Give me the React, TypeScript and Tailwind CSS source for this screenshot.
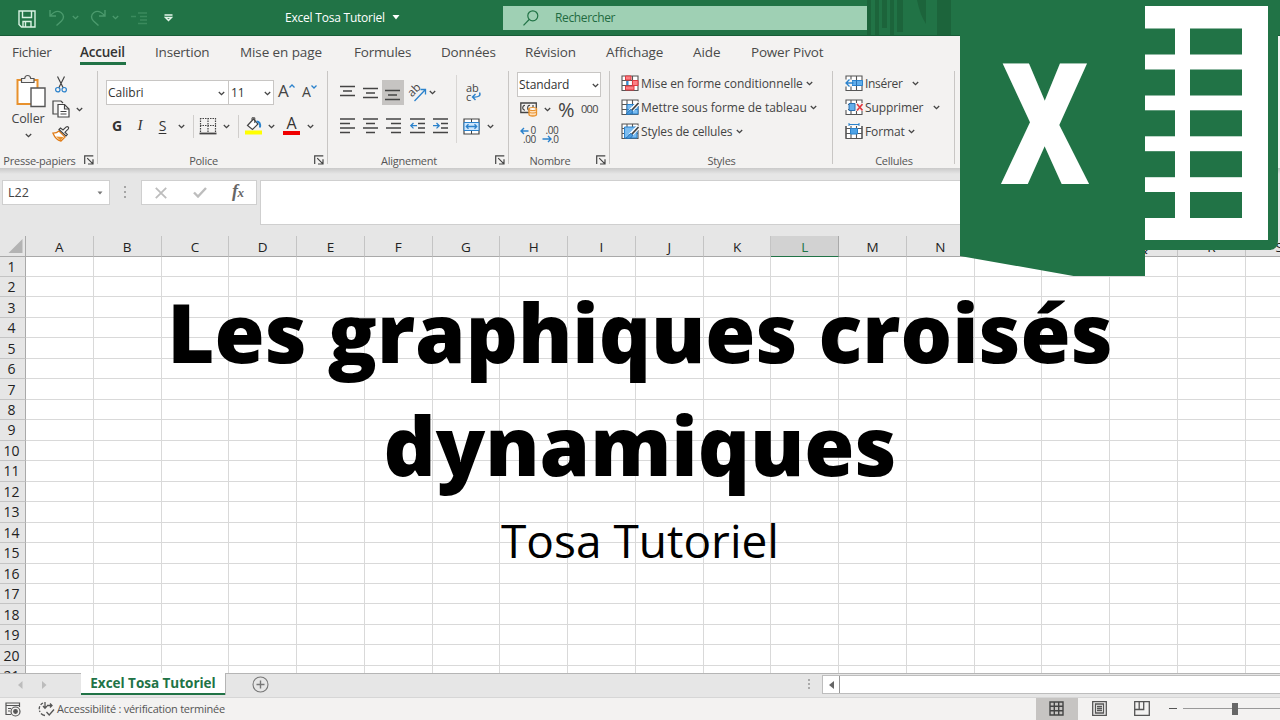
import React from "react";

const tabs = [
  { name: "Fichier", cell: "w-[80px] pl-[12px] tracking-[-0.3px]" },
  { name: "Accueil", cell: "w-[75px]" },
  { name: "Insertion", cell: "w-[85px] tracking-[-0.2px]" },
  { name: "Mise en page", cell: "w-[114px]" },
  { name: "Formules", cell: "w-[87px] tracking-[-0.2px]" },
  { name: "Données", cell: "w-[84px] tracking-[-0.2px]" },
  { name: "Révision", cell: "w-[81px] tracking-[-0.2px]" },
  { name: "Affichage", cell: "w-[87px]" },
  { name: "Aide", cell: "w-[58px]" },
  { name: "Power Pivot", cell: "w-[90px] tracking-[-0.2px]" },
];

const columns = "ABCDEFGHIJKLMNOPQRS".split("");
const rows = Array.from({ length: 21 }, (_, i) => i + 1);

function Chevron({ className = "" }: { className?: string }) {
  return (
    <svg viewBox="0 0 7 5" className={`h-[5px] w-[7px] shrink-0 ${className}`} fill="none" stroke="#444" strokeWidth="1.3">
      <path d="M.8 1l2.7 2.7L6.2 1" />
    </svg>
  );
}

function Launcher() {
  return (
    <svg viewBox="0 0 10 10" className="h-[10px] w-[10px]" fill="none" stroke="#444" strokeWidth="1.2">
      <path d="M.7 9V.8h8.6M3.2 3.2l5.5 5.5M9 4.2V9H4" />
    </svg>
  );
}

function Group({
  title,
  width,
  launcher = true,
  children,
}: {
  title: string;
  width: string;
  launcher?: boolean;
  children: React.ReactNode;
}) {
  return (
    <section className={`flex h-[102px] shrink-0 flex-col ${width}`}>
      <div className="mt-[5px] flex h-[93px] flex-col border-r border-[#c8c6c4]">
        <div className="h-[81px] shrink-0">{children}</div>
        <div className="flex h-[16px] shrink-0 items-center pr-[3px]">
          <span className={`flex-1 text-center text-[11px] leading-none tracking-[-0.25px] whitespace-nowrap text-[#555] ${launcher ? "mr-[5px]" : "-mr-[4px]"}`}>
            {title}
          </span>
          {launcher && <Launcher />}
        </div>
      </div>
    </section>
  );
}

// Four-line paragraph icon, the offsets give the alignment
function Lines({ d, className = "" }: { d: string; className?: string }) {
  return (
    <svg viewBox="0 0 16 16" className={`h-[16px] w-[16px] shrink-0 ${className}`} stroke="#444" strokeWidth="1.3" fill="none">
      <path d={d} />
    </svg>
  );
}

function TableIcon({ kind }: { kind: string }) {
  return (
    <svg viewBox="0 0 18 17" className="h-[17px] w-[18px] shrink-0" fill="none">
      <path d="M1 1h16v14.5H1zM6 1v14.5M11.5 1v14.5M1 5.500h16M1 10.500h16" fill="#fff" stroke="#555" strokeWidth="1.1" />
      {kind === "cond" && (
        <>
          <path d="M4.500 1h5.500v4H4.500zM4.500 11H13v4H4.500zM11.500 5.500H17v5h-5.500z" fill="#fb7f84" stroke="#e0393f" />
          <path d="M5.500 6h2v4h-2z" fill="#2f8fdb" />
        </>
      )}
      {(kind === "table" || kind === "style") && (
        <>
          <path d={kind === "table" ? "M6 5.500h11v9.500H6z" : "M3.500 4h12.500v11H3.500z"} fill="#7bbcf0" stroke="#2b82cc" />
          {kind === "table" && <path d="M11.500 5.500V15M6 10.500h11" stroke="#2b82cc" />}
          <path d="M18 3.500L9 12.500" stroke="#fff" strokeWidth="4" />
          <path d="M17.500 4L10.500 11.500" stroke="#444" strokeWidth="1.800" />
          <path d="M10 10.500c-2 0-2 3-5 4.600 3 1 6.500-.5 6.500-3.100z" fill="#4f9ee0" stroke="#2573b8" />
        </>
      )}
      {kind === "insert" && (
        <>
          <path d="M7 5.500h10.500v5H7z" fill="#62aeea" stroke="#2b82cc" />
          <path d="M0 4.500h7v7H0z" fill="#f3f2f1" />
          <path d="M11.500 5.500v5" stroke="#2b6fb0" />
          <path d="M8.500 8H1M4.500 4.500L1 8l3.500 3.500" stroke="#2b82cc" strokeWidth="1.300" />
        </>
      )}
      {kind === "delete" && (
        <>
          <path d="M0 5h3v6H0zM10 4h8v8h-8z" fill="#f3f2f1" />
          <path d="M4 4.500h6v7H4z" fill="#62aeea" stroke="#2b6fb0" />
          <path d="M12 5l5.500 6.500M17.500 5L12 11.500" stroke="#e0393f" strokeWidth="1.600" />
        </>
      )}
      {kind === "format" && (
        <>
          <path d="M0 0h18v3H0z" fill="#f3f2f1" />
          <path d="M5.500 5.500h7v5.500h-7z" fill="#4fa3e6" stroke="#2b82cc" />
          <path d="M4 1.500h10M4 0v3M14 0v3" stroke="#2b82cc" />
          <path d="M1 3v12.500M17 3v12.500" stroke="#555" strokeWidth="1.100" />
        </>
      )}
    </svg>
  );
}

function TableButton({ kind, label, spacing, gap }: { kind: string; label: string; spacing: string; gap: string }) {
  return (
    <div className="flex h-[24px] items-center">
      <TableIcon kind={kind} />
      <span className={`ml-[2px] pt-[1px] text-[12px] leading-none whitespace-nowrap text-[#444] ${spacing}`}>{label}</span>
      <Chevron className={gap} />
    </div>
  );
}

function TitleBar() {
  return (
    <header className="flex h-[36px] items-center border-b border-[#185c37] bg-[#217346] text-white">
      <svg viewBox="0 0 18 18" className="mt-[2px] ml-[18px] h-[18px] w-[18px]" fill="none" stroke="#d9f2e3" strokeWidth="1.4">
        <path d="M1 1h16v16H3.500L1 14.500zM4.500 1v6.500h9V1M5 17v-5.500h8V17M7.500 12v5" />
      </svg>
      <svg viewBox="0 0 16 17" className="ml-[13px] h-[17px] w-[16px]" fill="none" stroke="#4b9a6d" strokeWidth="1.400">
        <path d="M1 1v6h6M1.300 6.800C5 2.500 9 1.500 12 3.500c3.500 2.500 3 6 .5 8.500L7.500 16.500" />
      </svg>
      <svg viewBox="0 0 7 5" className="ml-[7px] h-[5px] w-[7px]" fill="none" stroke="#4b9a6d" strokeWidth="1.300">
        <path d="M.8 1l2.700 2.700L6.200 1" />
      </svg>
      <svg viewBox="0 0 16 17" className="ml-[11px] h-[17px] w-[16px]" fill="none" stroke="#4b9a6d" strokeWidth="1.400">
        <path d="M15 1v6H9M14.700 6.800C11 2.500 7 1.500 4 3.500 .5 6 1 9.500 3.500 12l5 4.500" />
      </svg>
      <svg viewBox="0 0 7 5" className="ml-[6px] h-[5px] w-[7px]" fill="none" stroke="#4b9a6d" strokeWidth="1.300">
        <path d="M.8 1l2.700 2.700L6.200 1" />
      </svg>
      <svg viewBox="0 0 16 13" className="mt-[2px] ml-[12px] h-[13px] w-[16px]" fill="none" stroke="#3b8a5d" strokeWidth="1.400">
        <path d="M0 4.500h5M7 1h9M9 4.500h7M9 8h7M7 11.500h9" />
      </svg>
      <svg viewBox="0 0 9 8" className="ml-[17px] h-[8px] w-[9px]" fill="none" stroke="#e4f5ea" strokeWidth="1.400">
        <path d="M.5 1h8M1.500 3.500h6L4.500 6.500z" />
      </svg>
      <span className="ml-[112px] w-[101px] text-[12px] tracking-[-0.22px] whitespace-nowrap">Excel Tosa Tutoriel</span>
      <svg viewBox="0 0 8 5" className="ml-[6px] h-[5px] w-[8px]" fill="#fff">
        <path d="M.5 0h7L4 4.500z" />
      </svg>
      <div className="ml-[103px] flex h-[24px] w-[364px] items-center bg-[#9fd0b4] text-[#1f6b41]">
        <svg viewBox="0 0 16 16" className="ml-[20px] h-[16px] w-[16px]" fill="none" stroke="#217346" strokeWidth="1.200">
          <circle cx="9.800" cy="5.800" r="5" />
          <path d="M6.200 9.500L.5 15.300" />
        </svg>
        <span className="ml-[16px] pt-[1px] text-[12px] tracking-[-0.35px]">Rechercher</span>
      </div>
      <svg viewBox="0 0 90 35" className="h-[35px] w-[90px]" fill="#1c643b">
        <path d="M0 0h4v35H0zM8 0h4v35H8zM15 0h5v28h-5zM23 0h4v35h-4zM30 0h6v32h-6zM50 0h9v24Q53 15 50 0zM70 0h14v35H70z" />
      </svg>
    </header>
  );
}

function TabBar() {
  return (
    <nav className="flex h-[30px] bg-[#f3f2f1] text-[13.5px] tracking-[-0.1px] text-[#4a4a4a]">
      {tabs.map((tab) => (
        <div key={tab.name} className={`shrink-0 whitespace-nowrap ${tab.cell}`}>
          {tab.name === "Accueil" ? (
            <div className="h-[30px] w-[46px] pt-[7px]">
              <div className="h-[19px] text-[13.5px] leading-[19px] font-semibold tracking-[-0.2px] text-[#333]">{tab.name}</div>
              <div className="h-[3px] bg-[#217346]" />
            </div>
          ) : (
            <div className="pt-[7px] leading-[19px]">{tab.name}</div>
          )}
        </div>
      ))}
    </nav>
  );
}

function ClipboardGroup() {
  return (
    <Group title="Presse-papiers" width="w-[98px]">
      <div className="flex">
        <div className="ml-[10px] flex w-[36px] flex-col items-center pt-[3px]">
          <svg viewBox="0 0 30 34" className="ml-[5px] h-[34px] w-[30px] shrink-0" fill="none">
            <path d="M1.500 6h20v24h-20z" fill="#fff" stroke="#e8912d" strokeWidth="2" />
            <path d="M5.500 8.500V4.500h3.200c.3-4 5.600-4 6 0h3.300v4z" fill="#f3f2f1" stroke="#555" strokeWidth="1.200" />
            <path d="M15 14h14v18.500H15z" fill="#fff" stroke="#555" strokeWidth="1.400" />
          </svg>
          <span className="mt-[4px] text-[12.500px] leading-[14px] tracking-[-0.1px] text-[#444]">Coller</span>
          <Chevron className="mt-[7px]" />
        </div>
        <div className="ml-[6px] flex flex-col pt-[5px]">
          <svg viewBox="0 0 12 17" className="ml-[3px] h-[17px] w-[12px]" fill="none" strokeWidth="1.200">
            <path d="M2.500 .5l5.800 11.500M9.500 .5L3.700 12" stroke="#444" />
            <circle cx="2.800" cy="13.700" r="2.200" stroke="#2b82cc" />
            <circle cx="9.200" cy="13.700" r="2.200" stroke="#2b82cc" />
          </svg>
          <div className="mt-[7px] flex items-center">
            <svg viewBox="0 0 18 18" className="h-[18px] w-[18px]" fill="none" stroke="#444" strokeWidth="1.200">
              <path d="M5.500 14H1V1h8l2 2" />
              <path d="M6 4.500h6.500l4.500 4.500v8H6z" fill="#fff" />
              <path d="M12.500 4.500V9H17M8.500 11.500h6M8.500 14h6" />
            </svg>
            <Chevron className="ml-[6px]" />
          </div>
          <svg viewBox="0 0 18 17" className="mt-[7px] h-[17px] w-[18px]" fill="none">
            <path d="M1 8.200c2.500 0 4.500-.7 6-2.200l6 6c-1.500 1.500-3 3-4 4C5 15 2.500 12 1 8.200z" fill="#fff" stroke="#e07b16" strokeWidth="1.300" />
            <path d="M4 11.500l7.500.5-3 3.500z" fill="#e8912d" />
            <path d="M7 4.500l7 6.500 1.300-1.500-2.300-2.300 3.300-3.300c1-1.500-.7-3-2-2L11 5 8.500 3z" fill="#fff" stroke="#444" strokeWidth="1.200" />
          </svg>
        </div>
      </div>
    </Group>
  );
}

function FontGroup() {
  return (
    <Group title="Police" width="w-[230px]">
      <div className="flex items-center pt-[9px] pl-[8px] text-[12px] text-[#333]">
        <div className="flex h-[25px] w-[123px] items-center justify-between border border-[#c8c6c4] bg-white pt-[1px] pr-[3px] pl-[1px]">
          <span>Calibri</span>
          <Chevron />
        </div>
        <div className="flex h-[25px] w-[45px] items-center justify-between border border-l-0 border-[#c8c6c4] bg-white pt-[1px] pr-[2px] pl-[2px]">
          <span>11</span>
          <Chevron />
        </div>
        <div className="-mt-[3px] ml-[4px] flex w-[24px] text-[17px] leading-[20px] text-[#444]">
          A
          <svg viewBox="0 0 6 4" className="mt-[3px] h-[4px] w-[6px]" fill="none" stroke="#2b82cc" strokeWidth="1.300">
            <path d="M.5 3.500L3 1l2.500 2.500" />
          </svg>
        </div>
        <div className="-mt-[2px] flex text-[14px] leading-[20px] text-[#444]">
          A
          <svg viewBox="0 0 6 4" className="mt-[3px] h-[4px] w-[6px]" fill="none" stroke="#2b82cc" strokeWidth="1.300">
            <path d="M.5 .5L3 3 5.500 .5" />
          </svg>
        </div>
      </div>
      <div className="mt-[9px] flex h-[24px] items-center pl-[8px] text-[14px] text-[#333]">
        <span className="-mt-[2px] w-[22px] text-center font-bold">G</span>
        <span className="-mt-[2px] w-[24px] text-center font-['Liberation_Serif'] text-[15px] italic">I</span>
        <span className="-mt-[2px] w-[21px] text-center underline underline-offset-2">S</span>
        <div className="flex w-[16px] justify-center"><Chevron /></div>
        <div className="ml-[4px] h-[23px] w-px bg-[#d0cecc]" />
        <svg viewBox="0 0 18 18" className="-mt-[1px] ml-[5px] h-[18px] w-[18px]" fill="none" stroke="#444">
          <path d="M1.500 1v14M16.500 1v14M1 1.500h16M9 1v14M1 8.500h16" strokeDasharray="1.500 1" strokeWidth="1.200" />
          <path d="M.5 16.500h17" strokeWidth="1.800" />
        </svg>
        <div className="flex w-[18px] justify-center"><Chevron /></div>
        <div className="ml-[3px] h-[23px] w-px bg-[#d0cecc]" />
        <svg viewBox="0 0 17 18" className="ml-[6px] h-[18px] w-[17px]" fill="none">
          <path d="M2.500 8.500l6-6.500 4.500 5-5.500 5.500z" fill="#fff" stroke="#444" strokeWidth="1.200" />
          <path d="M7 3V.8h2.800V6" stroke="#444" />
          <path d="M11.500 4.500c3 0 4 2 3.500 6" stroke="#2b82cc" strokeWidth="2" />
          <path d="M0 13.500h17v4H0z" fill="#ff0" />
        </svg>
        <div className="flex w-[19px] justify-center"><Chevron /></div>
        <div className="ml-[2px] flex w-[17px] flex-col items-center">
          <span className="h-[14px] text-[16px] leading-[12px]">A</span>
          <div className="h-[4px] w-[17px] bg-[#f00000]" />
        </div>
        <div className="flex w-[20px] justify-center"><Chevron /></div>
      </div>
    </Group>
  );
}

function AlignGroup() {
  return (
    <Group title="Alignement" width="w-[181px]">
      <div className="flex">
        <div className="w-[128px] pl-[12px]">
          <div className="mt-[9px] flex h-[24px] items-center pt-[1px]">
            <Lines d="M0 1.500h15M3 6h9M0 10.500h15" />
            <Lines d="M0 3.500h15M3 8h9M0 12.500h15" className="ml-[7px]" />
            <div className="ml-[3px] flex h-[25px] w-[22px] justify-center bg-[#c6c4c2] pt-[8px]">
              <Lines d="M0 2.500h15M3 7h9M0 11.500h15" />
            </div>
            <svg viewBox="0 0 20 18" className="ml-[4px] h-[18px] w-[20px] overflow-visible" fill="none">
              <text x="3" y="13" transform="rotate(-45 4 12)" fontSize="11.500" fill="#444">ab</text>
              <path d="M6.500 17L17 6M12.500 5.500H17.500V10.500" stroke="#2b82cc" strokeWidth="1.300" />
            </svg>
            <Chevron className="ml-[1px]" />
          </div>
          <div className="mt-[14px] flex items-center">
            <Lines d="M0 1h15M0 5.500h10M0 10h15M0 14.500h10" />
            <Lines d="M0 1h15M3 5.500h9M0 10h15M3 14.500h9" className="ml-[7px]" />
            <Lines d="M0 1h15M5 5.500h10M0 10h15M5 14.500h10" className="ml-[7px]" />
            <svg viewBox="0 0 16 16" className="ml-[8px] h-[16px] w-[16px]" fill="none" strokeWidth="1.300">
              <path d="M0 1h15M8 5.500h7M8 10h7M0 14.500h15" stroke="#444" />
              <path d="M7 7.700H1M3.500 5L.8 7.700l2.700 2.700" stroke="#2b82cc" />
            </svg>
            <svg viewBox="0 0 16 16" className="ml-[7px] h-[16px] w-[16px]" fill="none" strokeWidth="1.300">
              <path d="M0 1h15M8 5.500h7M8 10h7M0 14.500h15" stroke="#444" />
              <path d="M0 7.700h6M3.500 5l2.700 2.700-2.700 2.700" stroke="#2b82cc" />
            </svg>
          </div>
        </div>
        <div className="mt-[4px] h-[68px] w-px bg-[#d8d6d4]" />
        <div className="pt-[12px] pl-[6px]">
          <svg viewBox="0 0 18 19" className="ml-[3px] h-[19px] w-[18px] overflow-visible" fill="none">
            <text x="0" y="8.500" fontSize="11" fill="#444">ab</text>
            <text x="0" y="17.500" fontSize="11" fill="#444">c</text>
            <path d="M13.500 9.500c1.500 3-.5 5-6.500 4.500M9.500 11L6.500 14l3 3" stroke="#2b82cc" strokeWidth="1.400" />
          </svg>
          <div className="mt-[16px] flex items-center">
            <svg viewBox="0 0 17 17" className="h-[17px] w-[17px]" fill="none">
              <path d="M1 1h15v15H1z" fill="#fff" stroke="#444" strokeWidth="1.200" />
              <path d="M1 4.500h15v8H1z" fill="#cfe6fa" stroke="#2b82cc" />
              <path d="M8.500 1v3M8.500 13v3" stroke="#444" />
              <path d="M3.500 8.500h10M5.500 6.300L3.300 8.500l2.200 2.200M11.500 6.300l2.200 2.200-2.200 2.200" stroke="#2b82cc" strokeWidth="1.300" />
            </svg>
            <Chevron className="ml-[7px]" />
          </div>
        </div>
      </div>
    </Group>
  );
}

function NumberGroup() {
  return (
    <Group title="Nombre" width="w-[101px]">
      <div className="mt-[1px] ml-[8px] flex h-[25px] w-[84px] items-center justify-between border border-[#c8c6c4] bg-white pt-[1px] pr-[1px] pl-[1px] text-[12px] tracking-[-0.1px] text-[#333]">
        <span>Standard</span>
        <Chevron />
      </div>
      <div className="flex h-[25px] items-center pl-[11px] text-[#444]">
        <svg viewBox="0 0 18 15" className="h-[15px] w-[18px]" fill="none">
          <path d="M.8 1h15.500v9.500H.8z" stroke="#444" strokeWidth="1.300" />
          <path d="M5 3.500c-3-.5-3 5 0 4.500M10 3.500c-3-1-3 5.500-.5 4.500M13 3v2" stroke="#444" strokeWidth="1.200" />
          <path d="M9 7v5.500c0 2 7.500 2 7.500 0V7z" fill="#fde0bd" stroke="#e8912d" strokeWidth="1.300" />
          <path d="M9 9.500c0 2 7.500 2 7.500 0" stroke="#e8912d" />
          <ellipse cx="12.750" cy="7" rx="3.750" ry="1.500" fill="#fff" stroke="#e8912d" strokeWidth="1.200" />
        </svg>
        <Chevron className="ml-[6px]" />
        <span className="ml-[7px] w-[22px] text-[20px] leading-none">%</span>
        <span className="-mt-[2px] ml-[1px] text-[11px] leading-none tracking-[-0.700px]">000</span>
      </div>
      <div className="flex h-[26px] items-center gap-[4px] pl-[11px]">
        <svg viewBox="0 0 18 18" className="h-[18px] w-[18px] overflow-visible" fill="none">
          <text x="10.500" y="8" fontSize="10" fill="#444">0</text>
          <text x="3" y="17" fontSize="10" letterSpacing="-.4" fill="#444">.00</text>
          <path d="M8.500 5H1M4 2L1 5l3 3" stroke="#2b82cc" strokeWidth="1.400" />
        </svg>
        <svg viewBox="0 0 18 18" className="h-[18px] w-[18px] overflow-visible" fill="none">
          <text x="3.500" y="8" fontSize="10" letterSpacing="-.4" fill="#444">.00</text>
          <text x="9" y="17" fontSize="10" letterSpacing="-.4" fill="#444">.0</text>
          <path d="M.5 13H9M6 10l3 3-3 3" stroke="#2b82cc" strokeWidth="1.400" />
        </svg>
      </div>
    </Group>
  );
}

function Ribbon() {
  return (
    <div className="flex h-[102px] bg-[#f3f2f1]">
      <ClipboardGroup />
      <FontGroup />
      <AlignGroup />
      <NumberGroup />
      <Group title="Styles" width="w-[223px]" launcher={false}>
        <div className="pl-[11px]">
          <TableButton kind="cond" label="Mise en forme conditionnelle" spacing="tracking-[-0.05px]" gap="ml-[3px]" />
          <TableButton kind="table" label="Mettre sous forme de tableau" spacing="tracking-[-0.02px]" gap="ml-[3px]" />
          <TableButton kind="style" label="Styles de cellules" spacing="tracking-[-0.15px]" gap="ml-[4px]" />
        </div>
      </Group>
      <Group title="Cellules" width="w-[122px]" launcher={false}>
        <div className="pl-[12px]">
          <TableButton kind="insert" label="Insérer" spacing="tracking-[-0.3px]" gap="ml-[9px]" />
          <TableButton kind="delete" label="Supprimer" spacing="tracking-[-0.1px]" gap="ml-[10px]" />
          <TableButton kind="format" label="Format" spacing="tracking-[-0.1px]" gap="ml-[3px]" />
        </div>
      </Group>
    </div>
  );
}

function FormulaBar() {
  return (
    <div className="h-[68px] bg-[#e6e6e6]">
      <div className="h-[6px] bg-linear-to-b from-[#c9c9c9] to-[#e6e6e6]" />
      <div className="flex items-start pt-[6px]">
        <div className="ml-[2px] flex h-[25px] w-[108px] items-center justify-between border border-[#cfcfcf] bg-white pt-[1px] pr-[6px] pl-[5px] text-[12.500px] text-[#444]">
          L22
          <svg viewBox="0 0 6 4" className="h-[4px] w-[6px]" fill="#777"><path d="M.5 .5h5L3 3.500z" /></svg>
        </div>
        <div className="mt-[6px] ml-[14px] flex flex-col gap-[3px]">
          <div className="h-[2px] w-[2px] bg-[#a5a5a5]" />
          <div className="h-[2px] w-[2px] bg-[#a5a5a5]" />
          <div className="h-[2px] w-[2px] bg-[#a5a5a5]" />
        </div>
        <div className="ml-[15px] flex h-[25px] w-[116px] items-center border border-[#cfcfcf] bg-white">
          <svg viewBox="0 0 12 12" className="ml-[13px] h-[12px] w-[12px]" stroke="#bdbdbd" strokeWidth="1.800"><path d="M.8 .8l10.400 10.400M11.200 .8L.8 11.200" /></svg>
          <svg viewBox="0 0 14 11" className="ml-[26px] h-[11px] w-[14px]" fill="none" stroke="#bdbdbd" strokeWidth="2.400"><path d="M1 5.500l4 4L13 1" /></svg>
          <span className="-mt-[3px] ml-[25px] font-['Liberation_Serif'] text-[18px] leading-none font-bold tracking-[-0.5px] text-[#666] italic">
            f<span className="text-[13px]">x</span>
          </span>
        </div>
        <div className="ml-[3px] h-[45px] w-[1018px] border border-[#cfcfcf] bg-white" />
      </div>
    </div>
  );
}

function Sheet() {
  return (
    <main className="flex h-[437px] flex-col overflow-hidden bg-white">
      <div className="flex h-[20.500px] shrink-0 bg-[#e6e6e6]">
        <div className="flex w-[26px] shrink-0 justify-end border-r border-b border-[#a9a9a9] pt-[3px] pr-[2px]">
          <svg viewBox="0 0 15 15" className="h-[14px] w-[15px]" fill="#b3b3b3"><path d="M15 0v15H0z" /></svg>
        </div>
        {columns.map((col) => (
          <div
            key={col}
            className={`flex w-[67.78px] shrink-0 items-center justify-center border-r border-b pt-[3px] text-[13.500px] leading-none ${
              col === "L" ? "border-b-[#217346] border-r-[#a9a9a9] bg-[#d2d2d2] text-[#217346]" : "border-b-[#a9a9a9] border-r-[#c4c4c4] text-[#222]"
            }`}
          >
            {col}
          </div>
        ))}
      </div>
      {rows.map((row) => (
        <div key={row} className="flex h-[20.47px] shrink-0">
          <div className="flex w-[26px] shrink-0 items-center justify-center border-r border-b border-r-[#a9a9a9] border-b-[#c4c4c4] bg-[#e6e6e6] pt-[1px] pr-[2px] text-[14px] leading-none text-[#222]">
            {row}
          </div>
          {columns.map((col) => (
            <div key={col} className="w-[67.78px] shrink-0 border-r border-b border-[#d9d9d9]" />
          ))}
        </div>
      ))}
    </main>
  );
}

function SheetTabs() {
  return (
    <div className="flex h-[24px] items-start border-t border-[#b5b5b5] bg-[#e6e6e6]">
      <svg viewBox="0 0 5 8" className="mt-[7px] ml-[18px] h-[8px] w-[5px]" fill="#bcbcbc"><path d="M4.500 0v8L0 4z" /></svg>
      <svg viewBox="0 0 5 8" className="mt-[7px] ml-[19px] h-[8px] w-[5px]" fill="#bcbcbc"><path d="M0 0v8l4.500-4z" /></svg>
      <div className="-mt-px ml-[34px] flex h-[22px] w-[144px] items-center justify-center border-b-2 border-[#217346] bg-white text-[13.500px] font-bold tracking-[-0.020px] whitespace-nowrap text-[#217346] shadow-[1px_0_0_#b5b5b5]">
        Excel Tosa Tutoriel
      </div>
      <svg viewBox="0 0 17 17" className="mt-[2px] ml-[27px] h-[17px] w-[17px]" fill="none" stroke="#777" strokeWidth="1.100">
        <circle cx="8.500" cy="8.500" r="7.500" />
        <path d="M8.500 4.500v8M4.500 8.500h8" strokeWidth="1.400" />
      </svg>
      <div className="mt-[5px] ml-[539px] flex flex-col gap-[2px]">
        <div className="h-[2px] w-[2px] bg-[#aaa]" />
        <div className="h-[2px] w-[2px] bg-[#aaa]" />
        <div className="h-[2px] w-[2px] bg-[#aaa]" />
      </div>
      <div className="mt-[1px] ml-[12px] flex h-[19px] flex-1 border border-r-0 border-[#bdbdbd] bg-white">
        <div className="flex w-[17px] items-center justify-center border-r border-[#999]">
          <svg viewBox="0 0 5 8" className="h-[8px] w-[5px]" fill="#666"><path d="M5 0v8L0 4z" /></svg>
        </div>
      </div>
    </div>
  );
}

function StatusBar() {
  return (
    <footer className="flex h-[23px] items-center border-t border-[#d6d6d6] bg-[#f3f2f1] text-[#555]">
      <svg viewBox="0 0 16 15" className="ml-[5px] h-[15px] w-[16px]" fill="none" stroke="#555" strokeWidth="1.200">
        <path d="M6 12.500H1V1h13.500v4M1 3.500h13.500M3 6.500h3M3 9h2" />
        <circle cx="10.500" cy="9.500" r="4.500" fill="#f3f2f1" />
        <circle cx="10.500" cy="9.500" r="1.800" fill="#555" />
      </svg>
      <svg viewBox="0 0 17 16" className="ml-[17px] h-[16px] w-[17px]" fill="none" stroke="#555" strokeWidth="1.300">
        <path d="M5 2A6.500 6.500 0 0 0 2 11" strokeDasharray="3 1.500" />
        <path d="M3 12.500A6.500 6.500 0 0 0 7 14.500M7 1v6M5 5l2 2.200L9 5M9 4.500h5M12 2.500l2 2-2 2M8.500 11l2.700 3L16 8.500" />
      </svg>
      <span className="ml-[2px] w-[979px] text-[11px] tracking-[-0.250px] whitespace-nowrap">Accessibilité : vérification terminée</span>
      <div className="flex h-[23px] w-[42px] items-center justify-center bg-[#c6c4c2]">
        <svg viewBox="0 0 15 15" className="-mt-[1px] mr-[2px] h-[15px] w-[15px]" fill="none" stroke="#444" strokeWidth="1.400">
          <path d="M1 1h13v13H1zM5.300 1v13M9.700 1v13M1 5.300h13M1 9.700h13" />
        </svg>
      </div>
      <svg viewBox="0 0 15 15" className="-mt-[1px] ml-[14px] h-[15px] w-[15px]" fill="none" stroke="#555" strokeWidth="1.300">
        <path d="M.7 .7h13.600v13.600H.7zM3.500 3h8v9h-8zM5 5.500h5M5 7.500h5M5 9.500h5" />
      </svg>
      <svg viewBox="0 0 16 15" className="-mt-[1px] ml-[27px] h-[15px] w-[16px]" fill="none" stroke="#555" strokeWidth="1.300">
        <path d="M.7 .7h14.600v13.600H.7zM.7 8.500h9V.7M5.200 .7v7.800" />
      </svg>
      <div className="-mt-[1px] ml-[19px] h-px w-[8px] bg-[#555]" />
      <div className="-mt-[1px] ml-[6px] h-px w-[49px] bg-[#999]" />
      <div className="-mt-[1px] h-[12px] w-[6px] bg-[#666]" />
      <div className="-mt-[1px] h-px flex-1 bg-[#999]" />
    </footer>
  );
}

function ExcelLogo() {
  return (
    <svg viewBox="0 0 320 280" className="absolute top-0 left-[960px] h-[280px] w-[320px]">
      <path d="M0 0h318v241q0 9-9 9H185v26h-71.500L0 256z" fill="#217346" />
      <path d="M185 6h123v234H185z" fill="#fff" />
      {[28.5, 69.5, 110.300, 151.200, 192].map((y) => (
        <g key={y} fill="#217346">
          <rect x="185" y={y} width="30" height="26" />
          <rect x="230" y={y} width="52" height="26" />
        </g>
      ))}
      <text
        x="0"
        y="0"
        fontSize="168"
        fontWeight="800"
        textAnchor="middle"
        transform="translate(85 183.500) scale(.73 1)"
        fill="#fff"
      >
        X
      </text>
    </svg>
  );
}

export default function App() {
  return (
    <div className="relative h-[720px] w-[1280px] overflow-hidden bg-white font-['Open_Sans','Noto_Sans',sans-serif]">
      <TitleBar />
      <TabBar />
      <Ribbon />
      <FormulaBar />
      <Sheet />
      <SheetTabs />
      <StatusBar />
      <div className="absolute top-[275px] left-0 w-[1280px] text-center text-black">
        <h1 className="text-[81.200px] leading-[113px] font-extrabold">
          Les graphiques croisés
          <br />
          dynamiques
        </h1>
        <p className="mt-[7px] text-[46px] leading-[64px]">Tosa Tutoriel</p>
      </div>
      <ExcelLogo />
    </div>
  );
}
